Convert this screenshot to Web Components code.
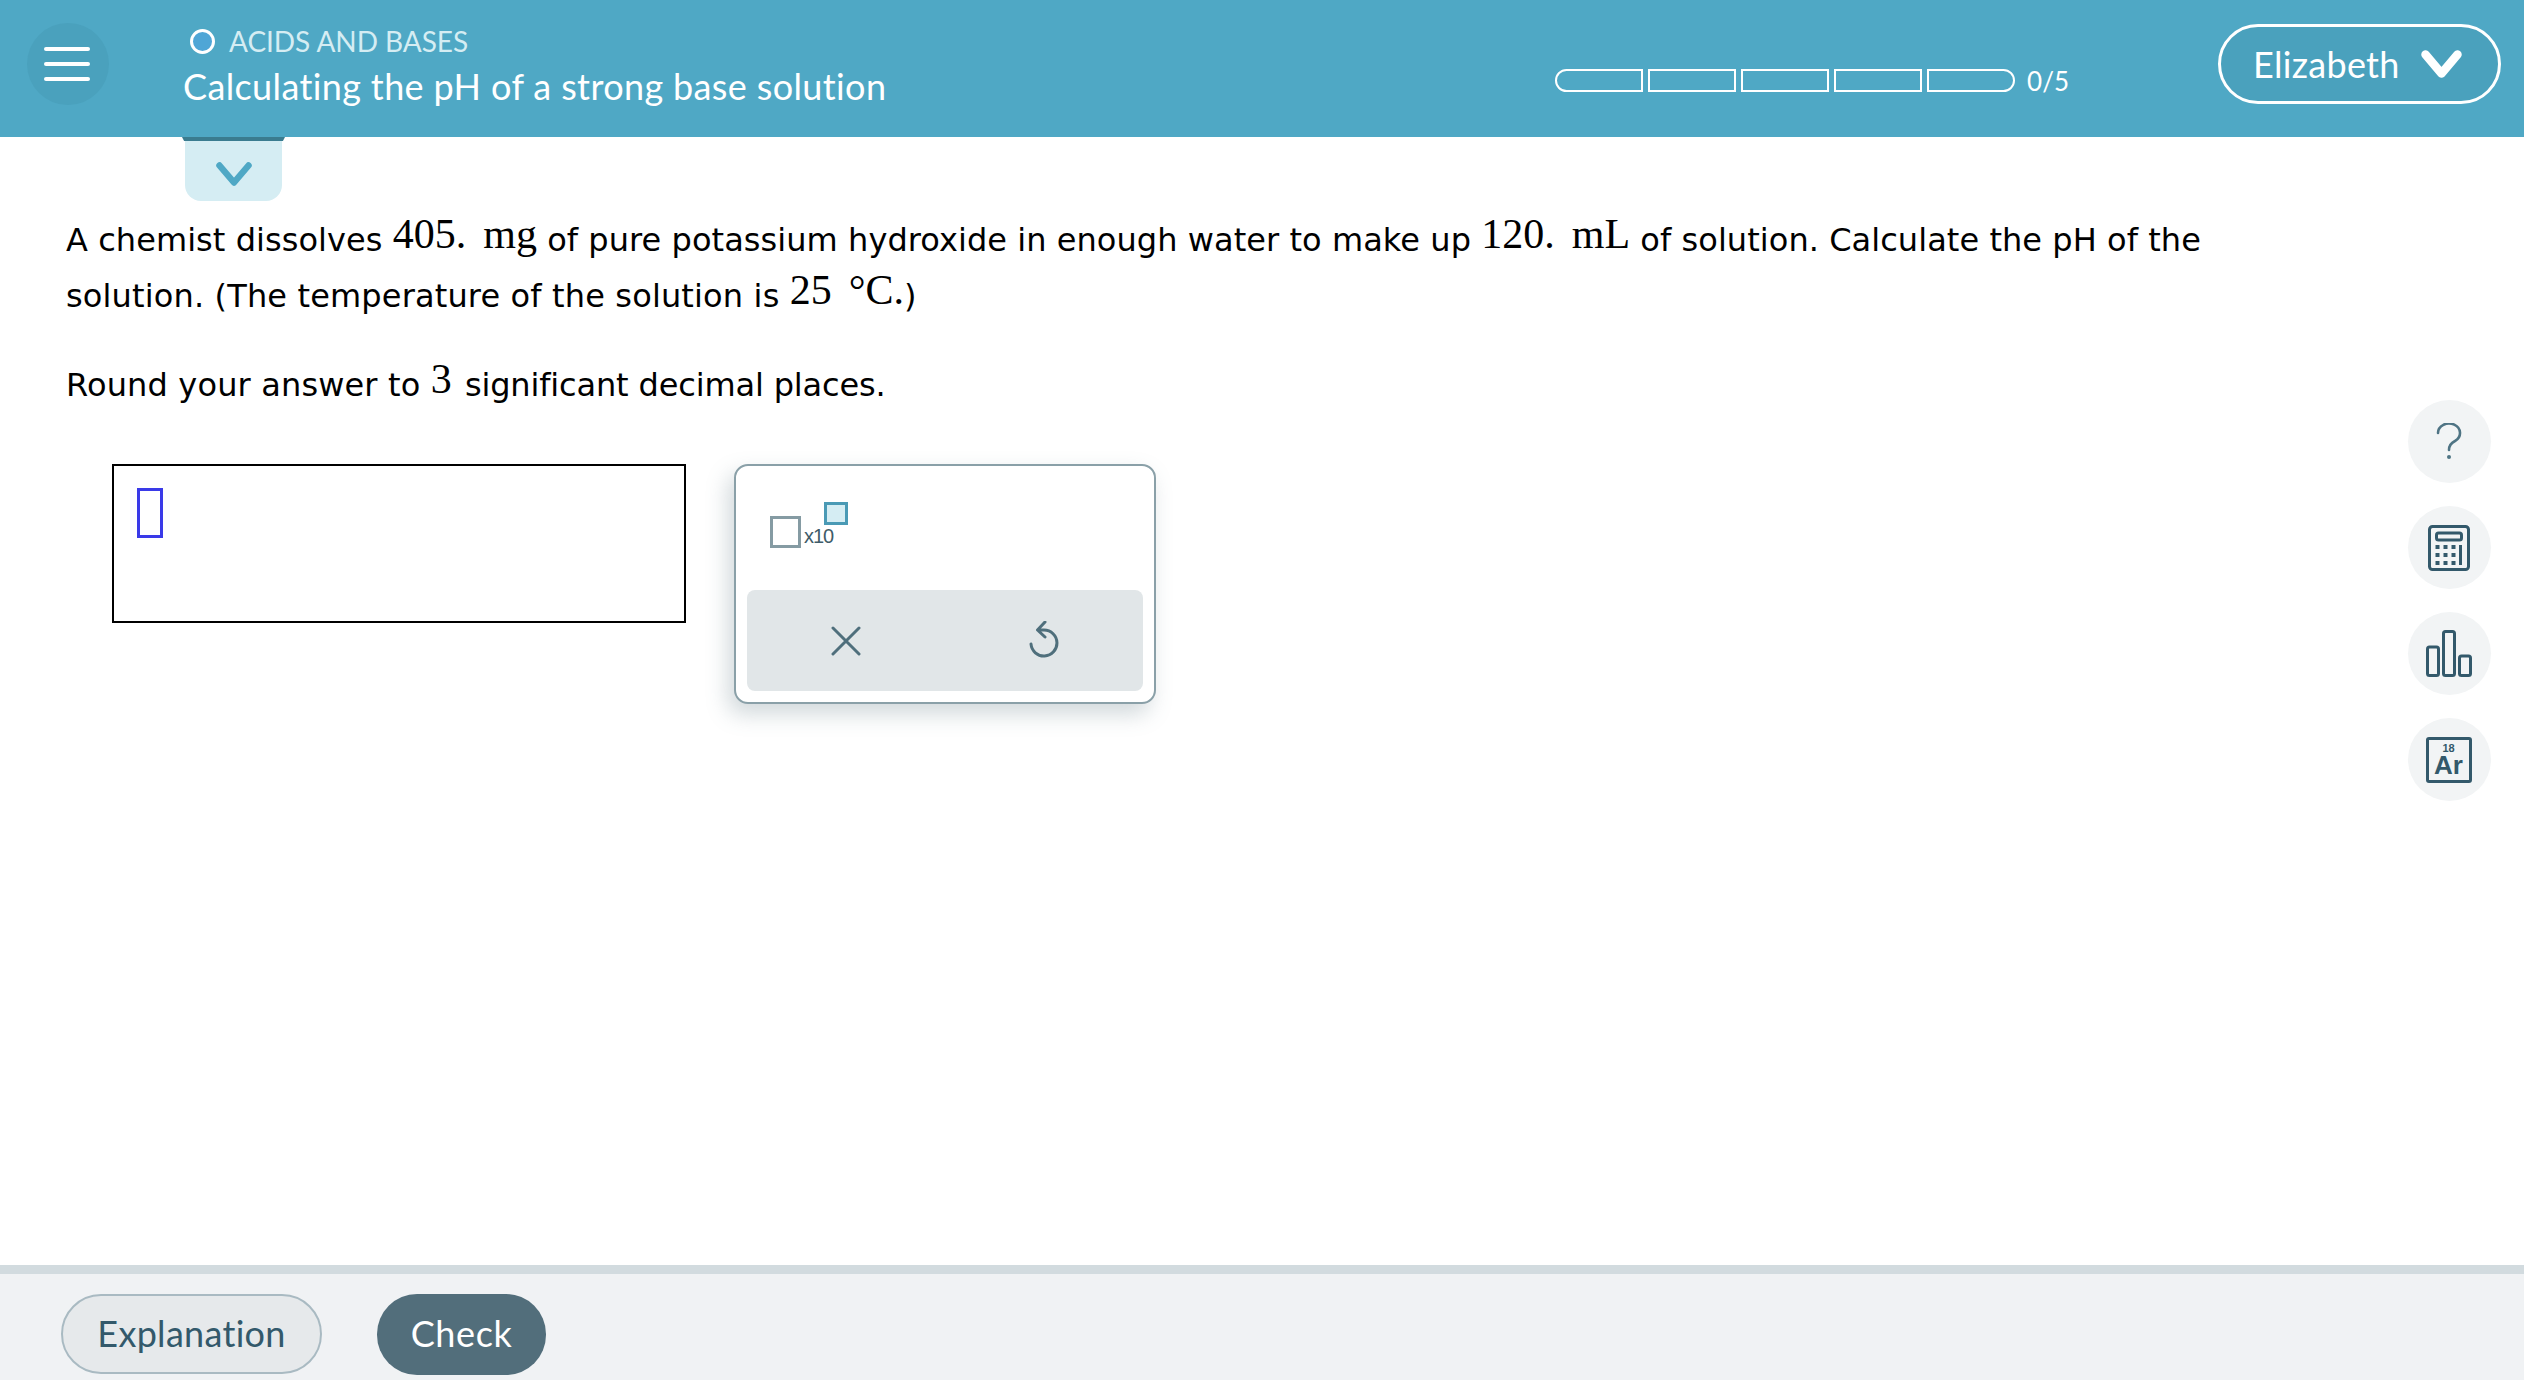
<!DOCTYPE html>
<html lang="en">
<head>
<meta charset="utf-8">
<title>Calculating the pH of a strong base solution</title>
<style>
html,body{margin:0;height:100%;background:#fff;overflow:hidden}
body{font-family:"Lato","Liberation Sans",sans-serif}
.wide{letter-spacing:.15px}
.mid{letter-spacing:.06px}
.tight{letter-spacing:-.15px;margin-left:3px}
</style>
</head>
<body>
<app-shell>
  <top-bar slot="top" topic="ACIDS AND BASES" title-text="Calculating the pH of a strong base solution" score="0/5" user="Elizabeth"></top-bar>
  <drop-tab slot="main"></drop-tab>
  <question-text slot="main">
    <p><span class="mid">A chemist dissolves <m-val>405.&nbsp; mg</m-val> of pure potassium hydroxide in enough water to make up <m-val>120.&nbsp; mL</m-val> of solution. Calculate the pH of the</span><br><span class="wide">solution. (The temperature of the solution is <m-val>25 &nbsp;°C.</m-val>)</span></p>
    <p><span class="wide">Round your answer to <m-val>3</m-val></span> <span class="tight">significant decimal places.</span></p>
  </question-text>
  <answer-area slot="main"></answer-area>
  <tool-rail slot="side"></tool-rail>
  <bottom-bar slot="bottom"></bottom-bar>
</app-shell>

<script>
class appShell extends HTMLElement{
    constructor(){
        super();
        this.attachShadow({mode:'open'})
        this.shadowRoot.innerHTML=`
        <style>
        :host{display:flex;flex-direction:column;height:1380px;width:2524px}
        .body{flex:1;display:flex;min-height:0}
        .main{flex:1;min-width:0}
        .side{width:116px;padding-top:263px;box-sizing:border-box}
        </style>
        <slot name="top"></slot>
        <div class="body">
            <div class="main"><slot name="main"></slot></div>
            <div class="side"><slot name="side"></slot></div>
        </div>
        <slot name="bottom"></slot>
        `;
    }
}

class topBar extends HTMLElement{
    constructor(){
        super();
        this.attachShadow({mode:'open'})
    }
    connectedCallback(){
        this.shadowRoot.innerHTML=`
        <style>
        :host{display:flex;align-items:flex-start;height:137px;background:#4fa8c5;color:#fff;flex:none}
        .burger{width:82px;height:82px;margin:23px 0 0 27px;padding-right:3px;box-sizing:border-box;border-radius:50%;background:#4aa1bd;display:flex;flex-direction:column;justify-content:center;gap:11px;align-items:center;flex:none}
        .burger i{display:block;width:46px;height:4px;border-radius:2px;background:#fff}
        .titles{margin-left:74px;padding-top:26px;flex:1}
        .topic{display:flex;align-items:center;gap:14px;margin-left:7px;height:30px;font-size:28px;color:#d5edf3;letter-spacing:-.05px}
        .ring{width:25px;height:25px;border-radius:50%;box-sizing:border-box;border:3px solid #fff;background:#4fa6d6}
        .name{font-size:36px;line-height:44px;margin-top:8px;letter-spacing:.37px}
        .score{display:flex;align-items:center;margin-top:69px;height:23px;gap:12px;font-size:26px}
        .user{margin:24px 23px 0 149px;width:283px;height:80px;box-sizing:border-box;border:3px solid #fff;border-radius:40px;background:#4aa1bd;display:flex;align-items:center;gap:21px;padding-left:32px;font-size:36px;letter-spacing:.3px}
        </style>
        <div class="burger"><i></i><i></i><i></i></div>
        <div class="titles">
            <div class="topic"><span class="ring"></span>${this.getAttribute('topic')}</div>
            <div class="name">${this.getAttribute('title-text')}</div>
        </div>
        <div class="score">
            <progress-pills count="5"></progress-pills>
            <span>${this.getAttribute('score')}</span>
        </div>
        <div class="user">
            <span>${this.getAttribute('user')}</span>
            <svg width="41" height="28" viewBox="0 0 41 28"><path d="M4.500 4.500 L20.500 23.500 L36.500 4.500" fill="none" stroke="#fff" stroke-width="8.500" stroke-linecap="round" stroke-linejoin="round"/></svg>
        </div>
        `;
    }
}

class progressPills extends HTMLElement{
    constructor(){
        super();
        this.attachShadow({mode:'open'})
    }
    connectedCallback(){
        let n=Number(this.getAttribute('count'))
        let cells=''
        for(let i=0;i<n;i++) cells+='<b></b>'
        this.shadowRoot.innerHTML=`
        <style>
        :host{display:flex;gap:5px}
        b{display:block;width:88px;height:23px;box-sizing:border-box;border:2px solid #fff}
        b:first-of-type{border-radius:12px 0 0 12px}
        b:last-of-type{border-radius:0 12px 12px 0}
        </style>${cells}`;
    }
}

class dropTab extends HTMLElement{
    constructor(){
        super();
        this.attachShadow({mode:'open'})
        this.shadowRoot.innerHTML=`
        <style>
        :host{display:block;margin-left:182px;width:103px;height:64px}
        .top{height:4px;background:#3a7c90;clip-path:polygon(0 0,100% 0,98% 100%,2% 100%)}
        .tab{margin:0 3px;height:60px;background:#d5edf3;border-radius:0 0 16px 16px;display:flex;justify-content:center;padding-top:21px;box-sizing:border-box}
        </style>
        <div class="top"></div>
        <div class="tab">
            <svg width="36" height="24" viewBox="0 0 36 24"><path d="M3.500 3.500 L18 20.500 L32.500 3.500" fill="none" stroke="#4fa8c5" stroke-width="6.500" stroke-linecap="round" stroke-linejoin="round"/></svg>
        </div>
        `;
    }
}

class questionText extends HTMLElement{
    constructor(){
        super();
        this.attachShadow({mode:'open'})
        this.shadowRoot.innerHTML=`
        <style>
        :host{display:block;margin:11px 0 0 66px;width:2300px;font-family:"DejaVu Sans",Verdana,sans-serif;font-size:32px;line-height:56px;color:#000;white-space:nowrap}
        ::slotted(p){margin:0 0 33px 0}
        </style>
        <slot></slot>
        `;
    }
}

// no whitespace round the slot: it would show up as a gap after the value
class mVal extends HTMLElement{
    constructor(){
        super();
        this.attachShadow({mode:'open'})
        this.shadowRoot.innerHTML=`<style>:host{display:inline;font-family:"Liberation Serif","Times New Roman",serif;font-size:42px;vertical-align:3px;line-height:1;letter-spacing:0;word-spacing:-2px}</style><slot></slot>`;
    }
}

class answerArea extends HTMLElement{
    constructor(){
        super();
        this.attachShadow({mode:'open'})
        this.shadowRoot.innerHTML=`
        <style>
        :host{display:flex;align-items:flex-start;gap:48px;margin:51px 0 0 112px}
        .box{width:574px;height:159px;box-sizing:border-box;border:2px solid #000;padding:22px 0 0 23px}
        .cursor{width:26px;height:50px;box-sizing:border-box;border:3px solid #3a3ae8}
        .panel{width:422px;height:240px;box-sizing:border-box;border:2px solid #8aa0a8;border-radius:14px;background:#fff;padding:11px;box-shadow:-6px 10px 22px rgba(90,115,125,.28);display:flex;flex-direction:column}
        .sci{flex:1;display:flex;align-items:flex-start;padding:25px 0 0 23px}
        .base{width:31px;height:32px;box-sizing:border-box;border:3px solid #859ba3;margin-top:14px}
        .x{font:20px "Liberation Sans",sans-serif;color:#3f5c69;margin:23px 0 0 3px;letter-spacing:-1px}
        .exp{width:24px;height:23px;box-sizing:border-box;border:3px solid #4a9ab5;background:#d5edf3;margin-left:-9px}
        .keys{height:101px;background:#e1e6e8;border-radius:8px;display:flex}
        .keys div{flex:1;display:flex;align-items:center;justify-content:center}
        </style>
        <div class="box"><div class="cursor"></div></div>
        <div class="panel">
            <div class="sci"><div class="base"></div><span class="x">x10</span><div class="exp"></div></div>
            <div class="keys">
                <div><svg width="30" height="30" viewBox="0 0 30 30"><path d="M2 2 L28 28 M28 2 L2 28" stroke="#4f6f7c" stroke-width="3" stroke-linecap="round"/></svg></div>
                <div><svg width="32" height="40" viewBox="0 0 32 40"><path d="M11 9 H16 A13 13 0 1 1 3 23 M17 1 L9.500 9 L17 16" fill="none" stroke="#4f6f7c" stroke-width="3" stroke-linecap="round" stroke-linejoin="round"/></svg></div>
            </div>
        </div>
        `;
    }
}

class toolRail extends HTMLElement{
    constructor(){
        super();
        this.attachShadow({mode:'open'})
        this.shadowRoot.innerHTML=`
        <style>
        :host{display:flex;flex-direction:column;gap:23px}
        .b{width:83px;height:83px;padding-right:2px;box-sizing:border-box;border-radius:50%;background:#f2f4f5;display:flex;align-items:center;justify-content:center}
        svg{display:block}
        .ar{width:46px;height:46px;box-sizing:border-box;border:3px solid #33596b;border-radius:3px;color:#33596b;font-family:"Liberation Sans",sans-serif;font-weight:700;text-align:center;line-height:1}
        .ar small{display:block;font-size:11px;margin-top:3px}
        .ar span{display:block;font-size:26px;margin-top:-2px}
        </style>
        <div class="b"><svg width="26" height="38" viewBox="0 0 26 38"><path d="M2 10 A11 9.500 0 1 1 19 18 C15 20 13 22 13 27" fill="none" stroke="#4f7484" stroke-width="2.600" stroke-linecap="round"/><circle cx="13" cy="34" r="2" fill="#4f7484"/></svg></div>
        <div class="b"><svg width="42" height="46" viewBox="0 0 42 46">
            <rect x="1.500" y="1.500" width="39" height="43" rx="3" fill="none" stroke="#33596b" stroke-width="3"/>
            <rect x="8.500" y="8" width="25" height="7" rx="2" fill="none" stroke="#33596b" stroke-width="3"/>
            <g fill="#33596b"><rect x="7.500" y="20" width="4" height="4"/><rect x="15.500" y="20" width="4" height="4"/><rect x="23.500" y="20" width="4" height="4"/><rect x="7.500" y="28" width="4" height="4"/><rect x="15.500" y="28" width="4" height="4"/><rect x="23.500" y="28" width="4" height="4"/><rect x="7.500" y="36" width="4" height="4"/><rect x="15.500" y="36" width="4" height="4"/><rect x="23.500" y="36" width="4" height="4"/><rect x="31" y="20" width="3" height="20"/></g>
        </svg></div>
        <div class="b"><svg width="46" height="47" viewBox="0 0 46 47" fill="none" stroke="#33596b" stroke-width="3">
            <rect x="1.500" y="17" width="11" height="28.500" rx="2"/><rect x="17.500" y="1.500" width="11" height="44" rx="2"/><rect x="33.500" y="26" width="11" height="19.500" rx="2"/>
        </svg></div>
        <div class="b"><div class="ar"><small>18</small><span>Ar</span></div></div>
        `;
    }
}

class bottomBar extends HTMLElement{
    constructor(){
        super();
        this.attachShadow({mode:'open'})
        this.shadowRoot.innerHTML=`
        <style>
        :host{display:flex;flex:none;align-items:flex-start;gap:55px;height:115px;box-sizing:border-box;border-top:9px solid #d2dbdf;background:#f0f2f4;padding:20px 0 0 61px;font-size:36px;letter-spacing:.3px}
        .btn{height:80px;box-sizing:border-box;border-radius:40px;padding-bottom:3px;display:flex;align-items:center;justify-content:center}
        .ex{width:261px;border:2px solid #a9bac2;background:#e6e9eb;color:#33596b}
        .ck{width:169px;background:#526e7b;color:#fff;height:81px;letter-spacing:.6px}
        </style>
        <div class="btn ex">Explanation</div>
        <div class="btn ck">Check</div>
        `;
    }
}

customElements.define('app-shell',appShell)
customElements.define('top-bar',topBar)
customElements.define('progress-pills',progressPills)
customElements.define('drop-tab',dropTab)
customElements.define('question-text',questionText)
customElements.define('m-val',mVal)
customElements.define('answer-area',answerArea)
customElements.define('tool-rail',toolRail)
customElements.define('bottom-bar',bottomBar)
</script>
</body>
</html>
